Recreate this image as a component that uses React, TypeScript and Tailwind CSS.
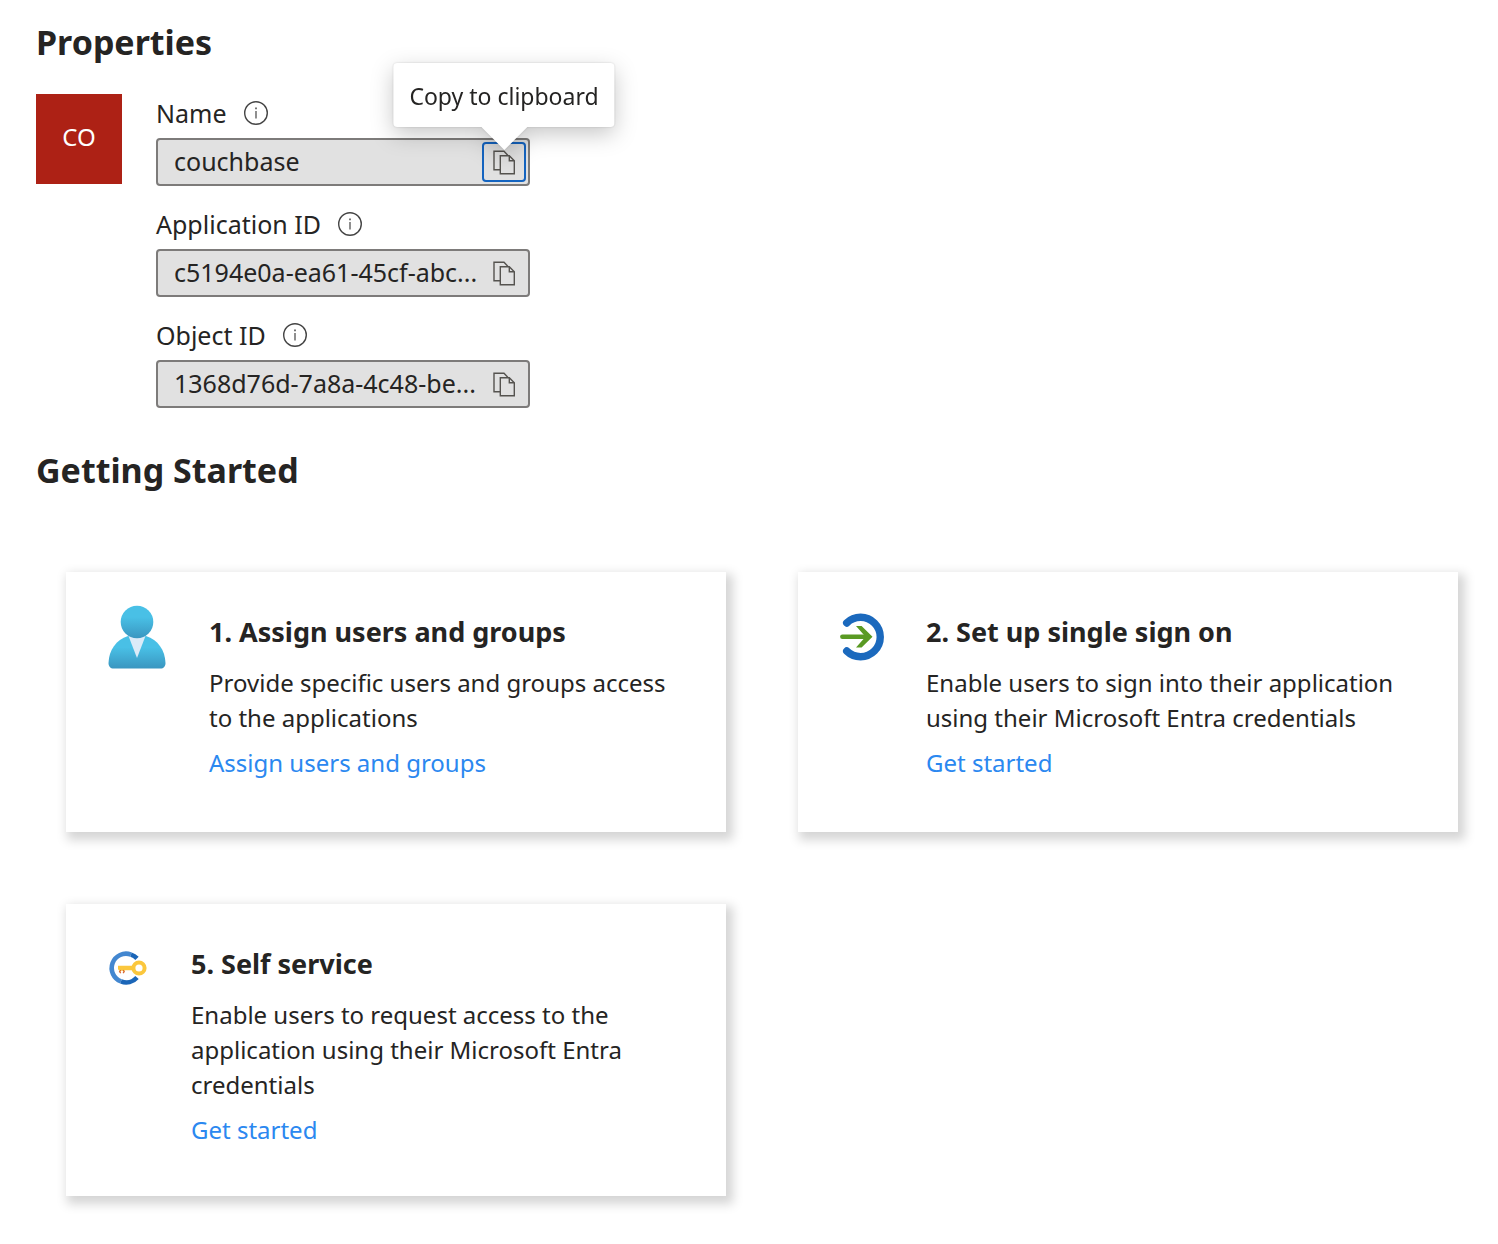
import { useId, type ReactNode } from "react";

function InfoIcon() {
  return (
    <svg width="26" height="26" viewBox="0 0 26 26" fill="none" stroke="#444" aria-hidden="true">
      <circle cx="13" cy="13" r="11.3" strokeWidth="1.4" />
      <path d="M13 11v7.500" strokeWidth="1.2" />
      <path d="M13 7.4v1.800" strokeWidth="1.5" />
    </svg>
  );
}

function CopyIcon() {
  return (
    <svg width="24" height="26" viewBox="0 0 24 26" fill="none" stroke="#55534f" strokeWidth="1.4" aria-hidden="true">
      <path d="M8 20.700H2V2.200h10l3.800 4" />
      <path d="M8.300 6.700h9l5 5v13h-14z" />
      <path d="M17.300 6.700v5h5" />
    </svg>
  );
}

function UserIcon() {
  return (
    <svg width="58" height="64" viewBox="0 0 58 64" aria-hidden="true">
      <defs>
        <linearGradient id="userBody" x1="0" y1="0" x2="0" y2="1">
          <stop offset="0.35" stopColor="#49c0e6" />
          <stop offset="1" stopColor="#3a96c0" />
        </linearGradient>
      </defs>
      <path d="M20 31C8 35 1 45 .5 58c0 3.500 2 5.500 5 5.500h47c3 0 5-2 5-5.500C57 45 50 35 38 31z" fill="url(#userBody)" />
      <path d="M20.500 31L29 53l8.500-22z" fill="#dcebf8" />
      <circle cx="29" cy="17" r="16.300" fill="url(#userBody)" />
    </svg>
  );
}

function SignOnIcon() {
  return (
    <svg width="46" height="48" viewBox="0 0 46 48" fill="none" aria-hidden="true">
      <path d="M6.700 10A19.700 19.700 0 1 1 6.700 38" stroke="#1b69bd" strokeWidth="7.400" strokeLinecap="round" />
      <path d="M2.400 23.700H27" stroke="#5a9a23" strokeWidth="4.600" strokeLinecap="round" />
      <path d="M16 13h5.600L32.500 23.700 21.600 34.400H16L25.500 23.700z" fill="#5a9a23" />
    </svg>
  );
}

function KeyIcon() {
  return (
    <svg width="40" height="36" viewBox="0 0 40 36" fill="none" aria-hidden="true">
      <path d="M23 4.600A14.300 14.300 0 0 0 13 31.400" stroke="#4387d0" strokeWidth="4.600" />
      <path d="M23 4.600A14.300 14.300 0 0 1 29 8.300" stroke="#1b66b8" strokeWidth="4.600" />
      <path d="M13 31.400A14.300 14.300 0 0 0 29 27.500" stroke="#1b66b8" strokeWidth="4.600" />
      <path d="M10 15.800h15v4.400h-8l-1.500 1.600-1.500-1.600-1.500 1.600-2.500-2.600z" fill="#fbc73d" />
      <circle cx="31" cy="18" r="5.600" stroke="#fbc73d" strokeWidth="4" />
      <path d="M12.800 20.200l-1.300 1.500 1.300 1.500M15 20.200l1.300 1.500-1.300 1.500" stroke="#d9622b" strokeWidth="1.100" />
    </svg>
  );
}

type FieldProps = { label: string; value: string; active?: boolean };

function Field({ label, value, active = false }: FieldProps) {
  const id = useId();
  return (
    <div>
      <div className="flex h-10 items-center gap-4 mb-1">
        <label htmlFor={id}>{label}</label>
        <button type="button" aria-label={`About ${label}`} className="-mt-[2px]">
          <InfoIcon />
        </button>
      </div>
      <div className="flex h-12 items-center rounded border-2 border-[#7d7b7a] bg-[#e1e1e1] pl-4 pr-[2px]">
        <input id={id} readOnly value={value} className="min-w-0 flex-1 bg-transparent outline-none" />
        <div className="relative">
          <button
            type="button"
            aria-label={`Copy ${label}`}
            className={
              active
                ? "flex h-10 w-11 items-center justify-center rounded border-2 border-[#1464c0]"
                : "flex h-10 w-11 items-center justify-center rounded border-2 border-transparent"
            }
          >
            <CopyIcon />
          </button>
          {active && (
            <div
              role="tooltip"
              className="absolute bottom-[55px] left-1/2 flex h-16 -translate-x-1/2 items-center whitespace-nowrap rounded bg-white px-4 pt-[3px] text-[23px] [filter:drop-shadow(0_0_1px_rgba(0,0,0,0.15))_drop-shadow(0_7px_11px_rgba(0,0,0,0.22))]"
            >
              Copy to clipboard
              <svg className="absolute left-1/2 top-full -translate-x-1/2" width="46" height="24" viewBox="0 0 46 24" aria-hidden="true">
                <path d="M0 0h46L23 23z" fill="#fff" />
              </svg>
            </div>
          )}
        </div>
      </div>
    </div>
  );
}

type CardProps = { icon: ReactNode; title: string; text: string; link: string };

function Card({ icon, title, text, link }: CardProps) {
  return (
    <section className="flex min-h-[260px] items-start bg-white pt-10 pb-[49px] pl-[42px] pr-10 shadow-[4px_5px_10px_3px_rgba(0,0,0,0.17)]">
      {icon}
      <div>
        <h3 className="text-[27px] font-bold leading-10">{title}</h3>
        <p className="mt-[13px] text-[24px] leading-[35px]">{text}</p>
        <a href="#" className="mt-[10px] block text-[24px] leading-[35px] text-[#2b88f0]">{link}</a>
      </div>
    </section>
  );
}

export default function App() {
  return (
    <main className="min-h-screen bg-white pt-[18px] pr-10 pb-12 pl-9 font-['Noto_Sans',sans-serif] text-[25px] text-[#252423]">
      <h2 className="text-[34px] font-bold leading-[48px]">Properties</h2>
      <div className="mt-7 flex items-start gap-[34px]">
        <div className="flex h-[90px] w-[86px] items-center justify-center bg-[#ad2115] pb-1 text-[24px] text-white">CO</div>
        <div className="flex w-[374px] flex-col gap-[19px]">
          <Field label="Name" value="couchbase" active />
          <Field label="Application ID" value="c5194e0a-ea61-45cf-abc..." />
          <Field label="Object ID" value="1368d76d-7a8a-4c48-be..." />
        </div>
      </div>

      <h2 className="mt-[38px] text-[34px] font-bold leading-[48px]">Getting Started</h2>
      <div className="mt-[78px] ml-[30px] grid grid-cols-2 items-start gap-[72px]">
        <Card
          icon={<div className="-mt-[7px] mr-[43px] shrink-0"><UserIcon /></div>}
          title="1. Assign users and groups"
          text="Provide specific users and groups access to the applications"
          link="Assign users and groups"
        />
        <Card
          icon={<div className="mt-[1px] mr-10 shrink-0"><SignOnIcon /></div>}
          title="2. Set up single sign on"
          text="Enable users to sign into their application using their Microsoft Entra credentials"
          link="Get started"
        />
        <Card
          icon={<div className="mt-[6px] mr-[43px] shrink-0"><KeyIcon /></div>}
          title="5. Self service"
          text="Enable users to request access to the application using their Microsoft Entra credentials"
          link="Get started"
        />
      </div>
    </main>
  );
}
